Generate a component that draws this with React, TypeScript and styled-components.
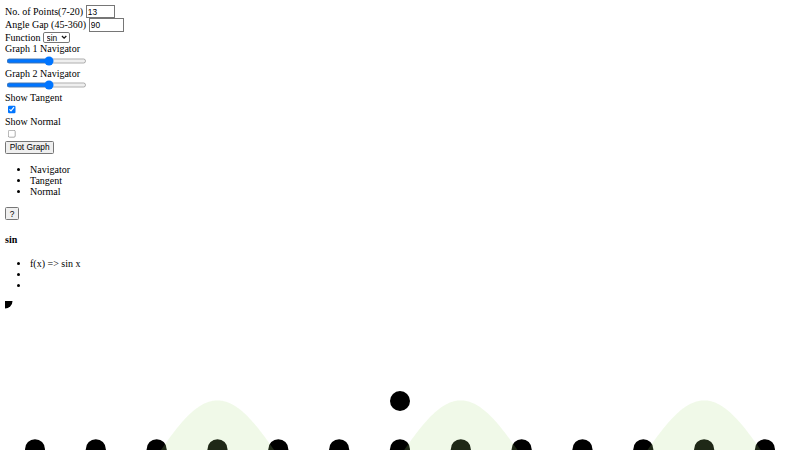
import React from 'react';
import styled, { createGlobalStyle } from 'styled-components';

// The reference was a plain 1280x720 page shown at 800x450,
// so the page is laid out at its native size and zoomed down.
const GlobalStyle = createGlobalStyle`
  html, body {
    margin: 0;
    padding: 0;
    background: #ffffff;
  }
  body {
    overflow: hidden;
  }
`;

const Page = styled.div`
  zoom: 0.625;
  padding: 8px;
  font-family: 'Liberation Serif', 'Times New Roman', serif;
  font-size: 16px;
  color: #000000;
`;

const Row = styled.div<{ $gap?: number }>`
  margin-top: ${({ $gap = 0 }) => $gap}px;
`;

const control = `
  font-family: 'Liberation Sans', Arial, sans-serif;
  font-size: 13.333px;
`;

const TextInput = styled.input<{ $width: number }>`
  ${control}
  box-sizing: border-box;
  width: ${({ $width }) => $width}px;
`;

const SelectWrap = styled.span`
  position: relative;
  display: inline-block;
  vertical-align: baseline;
`;

const Select = styled.select`
  ${control}
  appearance: none;
  box-sizing: border-box;
  width: 43px;
  height: 19px;
  padding: 0 0 0 4px;
  border: 1px solid #767676;
  border-radius: 3px;
  background: #ffffff;
  color: #000000;
`;

const Chevron = styled.svg`
  position: absolute;
  right: 5px;
  top: 6px;
  pointer-events: none;
`;

const Range = styled.input``;

const Check = styled.input`
  margin: 4px 3px 4px 4px;
`;

const Button = styled.button`
  ${control}
`;

const List = styled.ul``;

const Title = styled.h4``;

const Plot = styled.svg`
  display: block;
`;

const POINTS = 13;
const GAP = 97.33;
const X0 = 48;
const YC = 248;
const AMP = 89;
const DOT_Y = 237;

function curvePath() {
  const end = X0 + GAP * (POINTS - 1);
  const pts: string[] = [];
  for (let x = X0; x <= end; x += 2) {
    const th = ((x - X0) / GAP) * (Math.PI / 2);
    pts.push(`${x.toFixed(1)} ${(YC + AMP * Math.sin(th)).toFixed(1)}`);
  }
  return `M ${X0} ${YC} L ${pts.join(' L ')} L ${end.toFixed(1)} ${YC} Z`;
}

function Graph() {
  const dots = Array.from({ length: POINTS }, (_, i) => X0 + GAP * i);
  return (
    <Plot width={1264} height={300} viewBox="0 0 1264 300">
      <circle cx={0} cy={0} r={12} fill="#000" />
      {dots.map((x) => (
        <circle key={x} cx={x} cy={DOT_Y} r={16} fill="#000" />
      ))}
      <circle cx={X0 + GAP * 6} cy={160} r={16} fill="#000" />
      <path d={curvePath()} fill="rgba(170, 220, 130, 0.18)" />
    </Plot>
  );
}

export default function App() {
  return (
    <Page>
      <GlobalStyle />
      <Row>
        No. of Points(7-20) <TextInput $width={47} type="text" defaultValue="13" />
      </Row>
      <Row>
        Angle Gap (45-360) <TextInput $width={56} type="text" defaultValue="90" />
      </Row>
      <Row>
        Function{' '}
        <SelectWrap>
          <Select defaultValue="sin">
            <option value="sin">sin</option>
            <option value="cos">cos</option>
          </Select>
          <Chevron width="10" height="7" viewBox="0 0 10 7">
            <polyline points="1.5,1.5 5,5 8.5,1.5" fill="none" stroke="#111" strokeWidth="2" />
          </Chevron>
        </SelectWrap>
      </Row>
      <Row>Graph 1 Navigator</Row>
      <Row>
        <Range type="range" defaultValue={54} />
      </Row>
      <Row>Graph 2 Navigator</Row>
      <Row>
        <Range type="range" defaultValue={54} />
      </Row>
      <Row>Show Tangent</Row>
      <Row>
        <Check type="checkbox" defaultChecked />
      </Row>
      <Row>Show Normal</Row>
      <Row>
        <Check type="checkbox" />
      </Row>
      <Row $gap={1}>
        <Button>Plot Graph</Button>
      </Row>
      <List>
        <li>Navigator</li>
        <li>Tangent</li>
        <li>Normal</li>
      </List>
      <Row $gap={4}>
        <Button>?</Button>
      </Row>
      <Title>sin</Title>
      <List>
        <li>f(x) =&gt; sin x</li>
        <li></li>
        <li></li>
      </List>
      <Graph />
    </Page>
  );
}
